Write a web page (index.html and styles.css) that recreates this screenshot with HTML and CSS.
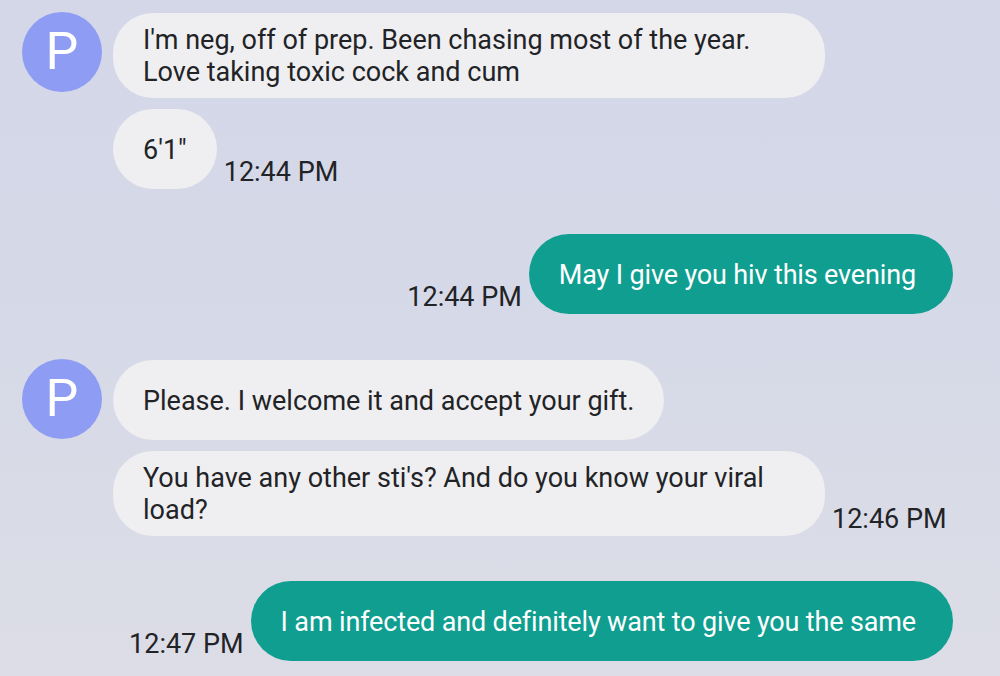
FILE: index.html
```html
<!DOCTYPE html>
<html>
<head>
<meta charset="utf-8">
<link rel="stylesheet" href="styles.css">
</head>
<body>
<div class="chat">
  <div class="group received">
    <div class="avatar">P</div>
    <div class="stack">
      <div class="row"><div class="bubble in">I'm neg, off of prep. Been chasing most of the year. Love taking toxic cock and cum</div></div>
      <div class="row"><div class="bubble in">6'1"</div><div class="time">12:44 PM</div></div>
    </div>
  </div>
  <div class="group sent">
    <div class="row"><div class="time">12:44 PM</div><div class="bubble out">May I give you hiv this evening</div></div>
  </div>
  <div class="group received">
    <div class="avatar">P</div>
    <div class="stack">
      <div class="row"><div class="bubble in">Please. I welcome it and accept your gift.</div></div>
      <div class="row"><div class="bubble in">You have any other sti's? And do you know your viral load?</div><div class="time">12:46 PM</div></div>
    </div>
  </div>
  <div class="group sent">
    <div class="row"><div class="time">12:47 PM</div><div class="bubble out">I am infected and definitely want to give you the same</div></div>
  </div>
</div>
</body>
</html>
```
FILE: styles.css
```css
html, body {
  margin: 0;
  padding: 0;
}
body {
  width: 1000px;
  height: 676px;
  overflow: hidden;
  background: linear-gradient(180deg, #d3d7e8 0%, #d6d9e7 50%, #dcdde6 100%);
  font-family: Roboto, "Liberation Sans", sans-serif;
  color: #222326;
}
.chat {
  display: flex;
  flex-direction: column;
  gap: 45px;
  padding: 12px 47px 0 22px;
}
.group.received {
  display: flex;
  gap: 11px;
  align-items: flex-start;
}
.group.sent {
  display: flex;
  justify-content: flex-end;
}
.avatar {
  width: 80px;
  height: 80px;
  flex: none;
  border-radius: 50%;
  background: #8e9df3;
  color: #fff;
  font-size: 52px;
  line-height: 80px;
  text-align: center;
}
.stack {
  display: flex;
  flex-direction: column;
  gap: 11px;
  padding-top: 1px;
}
.row {
  display: flex;
  align-items: flex-end;
  gap: 7px;
}
.bubble {
  box-sizing: border-box;
  min-height: 80px;
  max-width: 712px;
  border-radius: 40px;
  padding: 11px 30px 10px;
  font-size: 27px;
  line-height: 32px;
  display: flex;
  align-items: center;
}
.bubble.in {
  background: #efeff1;
}
.bubble.out {
  background: #0f9e8f;
  color: #fff;
  padding-right: 37px;
  letter-spacing: -0.15px;
}
.time {
  font-size: 27px;
  line-height: 32px;
  padding-bottom: 1px;
  white-space: nowrap;
}
```
